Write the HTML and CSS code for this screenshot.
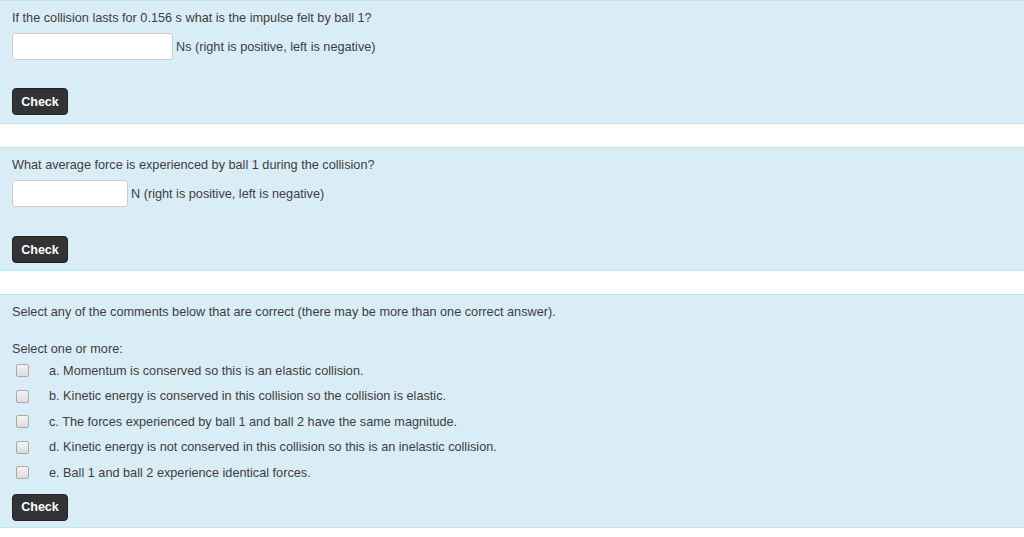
FILE: index.html
```html
<!DOCTYPE html>
<html>
<head>
<meta charset="utf-8">
<link rel="stylesheet" href="styles.css">
</head>
<body>
<div class="panel p1">
  <div class="q">If the collision lasts for 0.156 s what is the impulse felt by ball 1?</div>
  <div class="answer-row">
    <input class="ans wide" type="text">
    <span class="unit">Ns (right is positive, left is negative)</span>
  </div>
  <button class="check">Check</button>
</div>
<div class="spacer"></div>
<div class="panel p2">
  <div class="q">What average force is experienced by ball 1 during the collision?</div>
  <div class="answer-row">
    <input class="ans narrow" type="text">
    <span class="unit">N (right is positive, left is negative)</span>
  </div>
  <button class="check">Check</button>
</div>
<div class="spacer"></div>
<div class="panel p3">
  <div class="q">Select any of the comments below that are correct (there may be more than one correct answer).</div>
  <div class="prompt">Select one or more:</div>
  <div class="options">
    <label class="opt"><span class="cb"></span><span>a. Momentum is conserved so this is an elastic collision.</span></label>
    <label class="opt"><span class="cb"></span><span>b. Kinetic energy is conserved in this collision so the collision is elastic.</span></label>
    <label class="opt"><span class="cb"></span><span>c. The forces experienced by ball 1 and ball 2 have the same magnitude.</span></label>
    <label class="opt"><span class="cb"></span><span>d. Kinetic energy is not conserved in this collision so this is an inelastic collision.</span></label>
    <label class="opt"><span class="cb"></span><span>e. Ball 1 and ball 2 experience identical forces.</span></label>
  </div>
  <button class="check">Check</button>
</div>
</body>
</html>
```
FILE: styles.css
```css
html, body {
  margin: 0;
  padding: 0;
  background: #ffffff;
}
body {
  font-family: "Liberation Sans", Arial, sans-serif;
  font-size: 12.7px;
  color: #3d3d3d;
}
.panel {
  background: #d9edf7;
  border-top: 1px solid #bce8f1;
  border-bottom: 1px solid #bce8f1;
  padding: 0 12px;
  display: flex;
  flex-direction: column;
  align-items: flex-start;
}
.spacer {
  height: 23px;
}
.q {
  line-height: 18px;
}
.p1 { padding-top: 8px; padding-bottom: 8px; }
.p2 { padding-top: 8px; padding-bottom: 7px; }
.p3 { padding-top: 8px; padding-bottom: 6px; }
.answer-row {
  display: flex;
  align-items: center;
  gap: 3px;
  margin-top: 6px;
}
.ans {
  height: 27px;
  box-sizing: border-box;
  border: 1px solid #cccccc;
  border-radius: 3px;
  background: #fff;
  margin: 0;
  padding: 0 6px;
}
.wide { width: 161px; }
.narrow { width: 116px; }
.check {
  margin-top: 28px;
  width: 56px;
  height: 27px;
  background: #333333;
  color: #fff;
  border: 1px solid #222;
  border-radius: 4px;
  font-family: "Liberation Sans", Arial, sans-serif;
  font-weight: bold;
  font-size: 12.5px;
  padding: 0;
}
.p2 .check {
  margin-top: 29px;
}
.prompt {
  margin-top: 19px;
  line-height: 18px;
}
.options {
  display: flex;
  flex-direction: column;
}
.opt {
  display: flex;
  align-items: center;
  height: 25.5px;
}
.cb {
  width: 11px;
  height: 11px;
  border: 1px solid #a8a8a8;
  border-radius: 2px;
  background: linear-gradient(#f4f4f4, #dcdcdc);
  margin-left: 4px;
  margin-right: 20px;
}
.p3 .check {
  margin-top: 8px;
}
```
